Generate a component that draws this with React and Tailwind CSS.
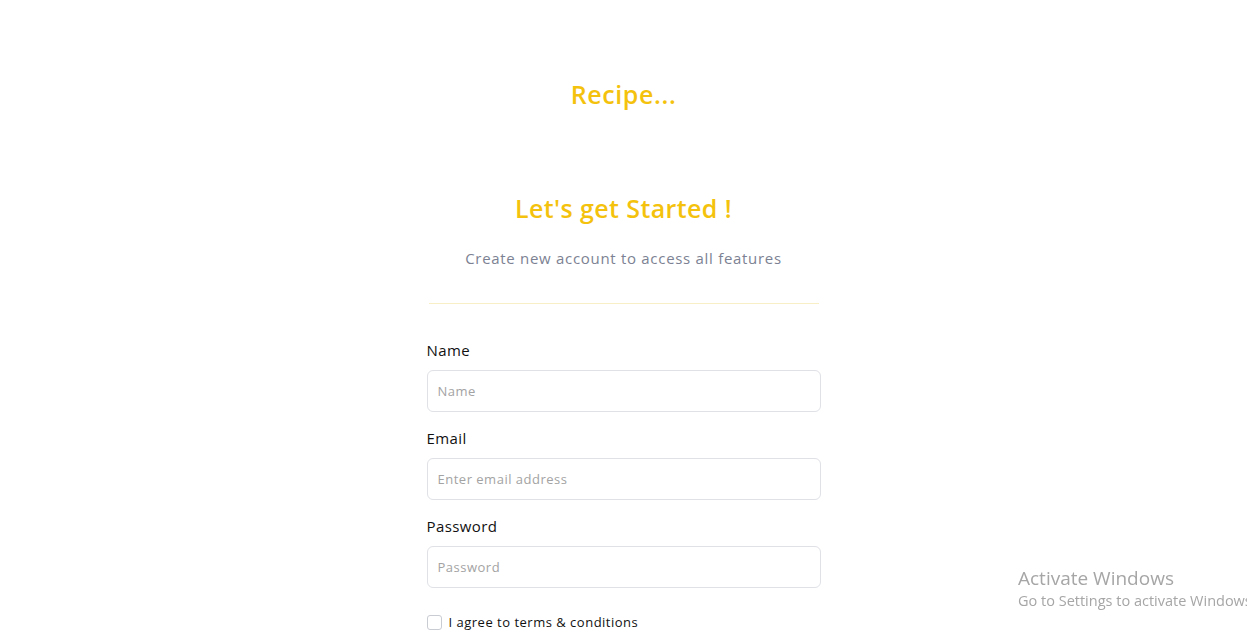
import { useState } from 'react';

function Field({ label, type = 'text', placeholder, value, onChange }) {
  return (
    <div className="flex flex-col">
      <label className="text-[15px] leading-[22px] tracking-[0.4px] text-[#111111] mb-[9px]">{label}</label>
      <input
        type={type}
        value={value}
        onChange={e => onChange(e.target.value)}
        placeholder={placeholder}
        className="h-[42px] w-full rounded-[6px] border border-[#dfe1e6] bg-white px-[10px] text-[13px] tracking-[0.5px] text-gray-800 outline-none placeholder:text-[#a3a3a3] focus:border-[#f4c20d]"
      />
    </div>
  );
}

export default function App() {
  const [name, setName] = useState('');
  const [email, setEmail] = useState('');
  const [password, setPassword] = useState('');
  const [agree, setAgree] = useState(false);

  return (
    <div className="min-h-screen bg-white font-['Open_Sans',sans-serif]">
      <div className="mx-auto flex w-[394px] flex-col items-center pt-[76px]">
        <h1 className="text-[25px] leading-[36px] font-semibold tracking-[0.6px] text-[#f4c20d]">Recipe...</h1>

        <h2 className="mt-[78px] text-[25px] leading-[36px] font-semibold tracking-[0.4px] text-[#f4c20d]">Let's get Started !</h2>
        <p className="mt-[21px] text-[15px] leading-[22px] tracking-[0.7px] text-[#7c8293]">Create new account to access all features</p>

        <div className="mt-[34px] h-px w-[390px] bg-[#f8efc6]" />

        <form className="mt-[35px] flex w-full flex-col gap-[15px]" onSubmit={e => e.preventDefault()}>
          <Field label="Name" placeholder="Name" value={name} onChange={setName} />
          <Field label="Email" type="email" placeholder="Enter email address" value={email} onChange={setEmail} />
          <Field label="Password" type="password" placeholder="Password" value={password} onChange={setPassword} />

          <label className="mt-[10px] flex items-center gap-[7px] text-[13px] tracking-[0.5px] text-[#111111]">
            <input
              type="checkbox"
              checked={agree}
              onChange={e => setAgree(e.target.checked)}
              className="h-[15px] w-[15px] appearance-none rounded-[3px] border border-[#c9ccd3] bg-white checked:bg-[#f4c20d]"
            />
            I agree to terms &amp; conditions
          </label>

          <button type="submit" className="mt-[20px] h-[42px] w-full rounded-[6px] bg-[#f4c20d] text-[15px] font-semibold text-white">
            Sign Up
          </button>
        </form>
      </div>

      <div className="pointer-events-none fixed left-[1018px] top-[566px] font-['Open_Sans',sans-serif] whitespace-nowrap text-[#a6a6a6]">
        <p className="text-[19px] leading-[24px]">Activate Windows</p>
        <p className="text-[14.5px] leading-[22px]">Go to Settings to activate Windows.</p>
      </div>
    </div>
  );
}
